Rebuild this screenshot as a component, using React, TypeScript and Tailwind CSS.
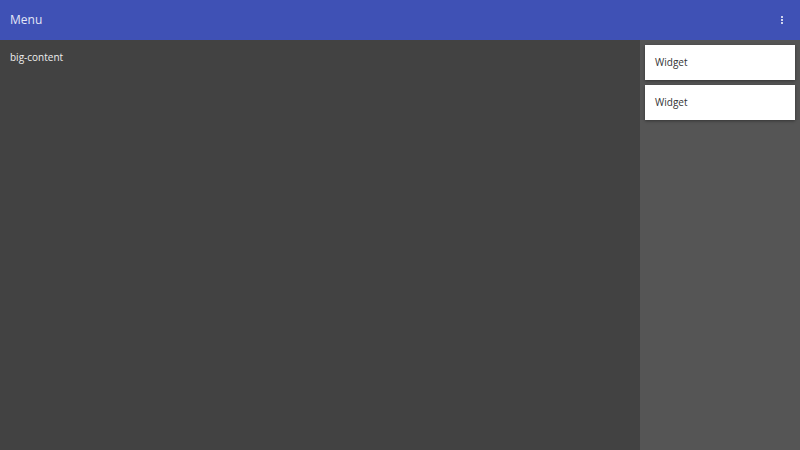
export default function App() {
  return (
    <div className="flex h-[450px] w-[800px] flex-col bg-[#424242] font-['Open_Sans',sans-serif]">
      {/* Toolbar */}
      <header className="flex h-10 shrink-0 items-center justify-between bg-[#3f51b5] pl-[10px] pr-[16px]">
        <span className="text-[12px] text-[#e3e6f7]">Menu</span>
        <button className="flex h-6 w-1 flex-col items-center justify-center gap-[1px]">
          <span className="h-[2px] w-[2px] rounded-full bg-white" />
          <span className="h-[2px] w-[2px] rounded-full bg-white" />
          <span className="h-[2px] w-[2px] rounded-full bg-white" />
        </button>
      </header>

      <div className="flex flex-1">
        {/* Main content */}
        <main className="flex-1 px-[10px] pt-[10px] text-[10px] text-[#eeeeee]">big-content</main>

        {/* Sidebar */}
        <aside className="flex w-40 shrink-0 flex-col gap-[5px] bg-[#555555] p-[5px]">
          {["Widget", "Widget"].map((label, i) => (
            <div
              key={i}
              className="flex h-[35px] items-center bg-white px-[10px] text-[10px] text-[#333333] shadow-[0_1px_3px_rgba(0,0,0,0.4)]"
            >
              {label}
            </div>
          ))}
        </aside>
      </div>
    </div>
  )
}
